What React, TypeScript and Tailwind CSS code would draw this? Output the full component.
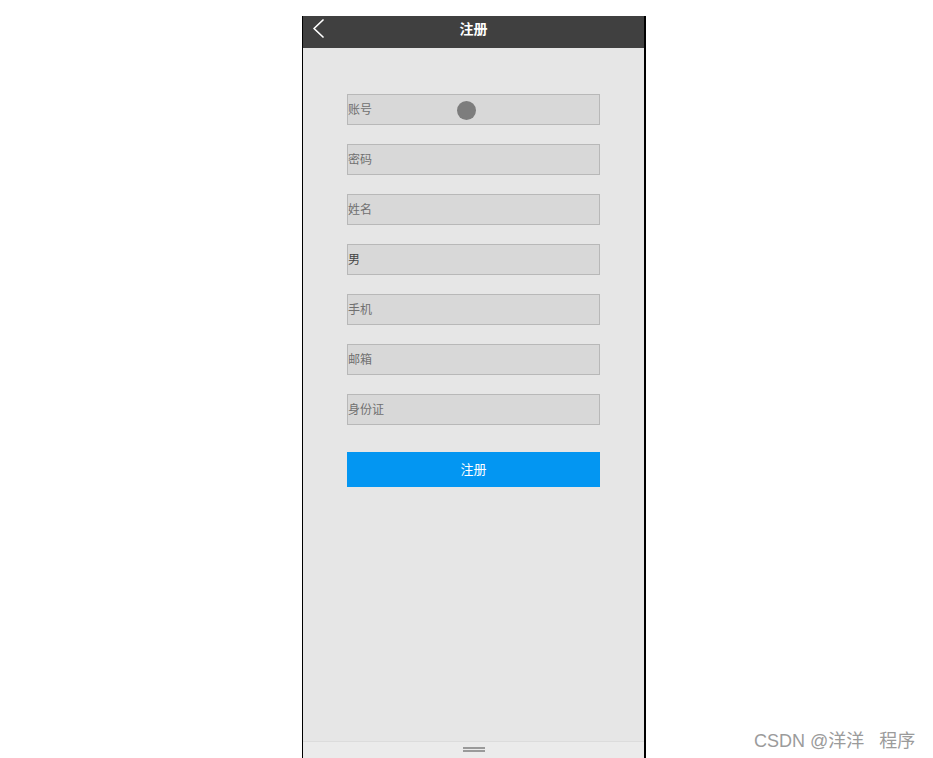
const fields = ["账号", "密码", "姓名", "男", "手机", "邮箱", "身份证"];

export default function App() {
  return (
    <div
      className="relative h-[758px] w-[933px] overflow-hidden bg-white"
      style={{ fontFamily: '"Noto Sans", "Noto Sans CJK SC", sans-serif' }}
    >
      <div className="ml-[302px] mt-[16px] flex h-[742px] w-[344px] flex-col border-l border-r-2 border-black">
        {/* 顶部导航 */}
        <div className="relative flex h-[32px] items-center justify-center bg-[#404040] pb-[7px]">
          <svg
            className="absolute left-[9px] top-[2px]"
            width="14"
            height="21"
            viewBox="0 0 14 21"
            fill="none"
            stroke="#ffffff"
            strokeWidth="1.7"
            strokeLinecap="round"
            strokeLinejoin="round"
          >
            <polyline points="11,2 2,10.5 11,19" />
          </svg>
          <span className="text-[14px] font-bold text-white">注册</span>
        </div>

        <div className="flex flex-1 flex-col bg-[#e6e6e6]">
          <div className="flex flex-1 flex-col px-[44px] pt-[46px]">
            {fields.map((f, i) => (
              <div
                key={f}
                className="relative mb-[19px] flex h-[31px] w-[253px] items-center border border-[#b8b8b8] bg-[#d8d8d8]"
              >
                <span className={`text-[12px] leading-none ${f === "男" ? "text-[#444]" : "text-[#707070]"}`}>{f}</span>
                {i === 0 && (
                  <span className="absolute left-[109px] top-[6px] h-[19px] w-[19px] rounded-full bg-[#7d7d7d]" />
                )}
              </div>
            ))}
            <button className="mt-[8px] h-[35px] w-[253px] bg-[#0396f2] text-[13px] text-white">注册</button>
          </div>

          {/* 底部手势条 */}
          <div className="flex h-[17px] flex-col items-center border-t border-[#dcdcdc] bg-[#ebebeb] pt-[5px]">
            <div className="h-[2px] w-[22px] bg-[#9a9a9a]" />
            <div className="mt-[1px] h-[2px] w-[22px] bg-[#9a9a9a]" />
          </div>
        </div>
      </div>

      <span
        className="absolute left-[754px] top-[728px] whitespace-pre text-[18px] text-[#9b9b9b]"
        style={{ fontFamily: '"Liberation Sans", "Noto Sans CJK SC", sans-serif' }}
      >
        {"CSDN @洋洋   程序"}
      </span>
    </div>
  );
}
